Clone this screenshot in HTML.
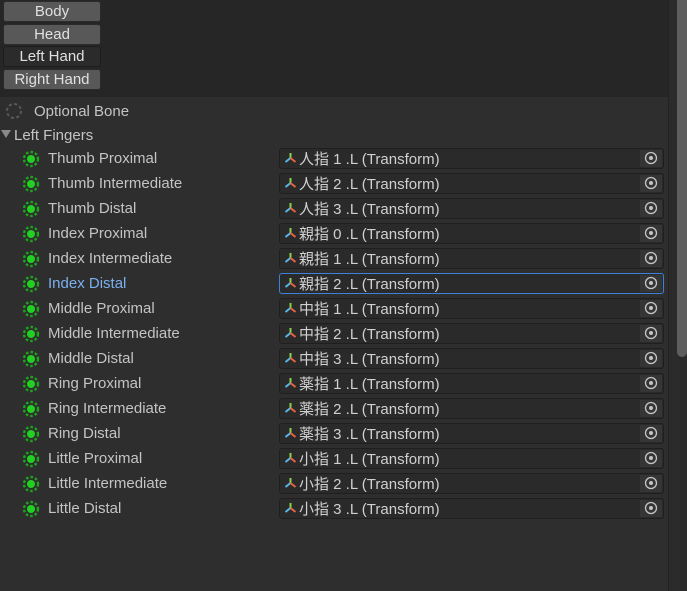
<!DOCTYPE html>
<html><head><style>
body{margin:0;width:687px;height:591px;background:#2e2e2e;font-family:"Liberation Sans","Noto Sans CJK JP",sans-serif;color:#c4c4c4;font-size:15px;position:relative;overflow:hidden}
.top{position:absolute;left:0;top:0;width:668px;height:97px;background:#262626}
.btn{position:absolute;left:3px;width:98px;height:21px;background:#585858;border:1px solid #2a2a2a;border-radius:3px;box-sizing:border-box;text-align:center;line-height:19px;color:#e0e0e0;font-size:15px}
.btn.sel{background:#2b2b2b;border-color:#1e1e1e}
.sb{position:absolute;left:668px;top:0;width:19px;height:591px;background:#2b2b2b;border-left:1px solid #232323}
.thumb{position:absolute;left:677px;top:0;width:10px;height:357px;background:#5e5e5e;border-radius:0 0 5px 5px}
.row{position:absolute;left:0;height:25px;width:668px}
.lab{position:absolute;left:48px;top:4px;line-height:18px}
.ic{position:absolute;left:22px;top:4px;width:18px;height:18px}
.f{position:absolute;left:279px;top:2px;width:385px;height:21px;background:#2a2a2a;border:1px solid #1f1f1f;border-radius:3px;box-sizing:border-box}
.f.act{border:1px solid #3d82d6}
.f .t{position:absolute;left:19px;top:2px;line-height:18px;color:#d0d0d0}
.f .ax{position:absolute;left:4px;top:3px}
.f .pk{position:absolute;right:1px;top:1px;width:22px;height:17px;background:#353535}
.f .pk svg{position:absolute;left:4px;top:1px}
</style></head><body>
<div class="top"></div>
<div class="btn" style="top:1px">Body</div>
<div class="btn" style="top:24px">Head</div>
<div class="btn sel" style="top:46px">Left Hand</div>
<div class="btn" style="top:69px">Right Hand</div>
<div class="sb"></div><div class="thumb"></div>
<svg style="position:absolute;left:5px;top:102px" width="18" height="18"><circle cx="9" cy="9" r="7" fill="none" stroke="#5a5a5a" stroke-width="2" stroke-dasharray="3 2.5"/></svg>
<div style="position:absolute;left:34px;top:103px;line-height:18px">Optional Bone</div>
<svg style="position:absolute;left:1px;top:130px" width="10" height="9"><path d="M0 0H10L5 8Z" fill="#8a8a8a"/></svg>
<div style="position:absolute;left:14px;top:127px;line-height:18px">Left Fingers</div>
<div id="rows"></div>
<script>
var L=["Thumb Proximal","Thumb Intermediate","Thumb Distal","Index Proximal","Index Intermediate","Index Distal","Middle Proximal","Middle Intermediate","Middle Distal","Ring Proximal","Ring Intermediate","Ring Distal","Little Proximal","Little Intermediate","Little Distal"];
var V=["人指 1","人指 2","人指 3","親指 0","親指 1","親指 2","中指 1","中指 2","中指 3","薬指 1","薬指 2","薬指 3","小指 1","小指 2","小指 3"];
var h="";
for(var i=0;i<15;i++){var y=146+i*25;var a=i==5;
h+='<div class="row" style="top:'+y+'px"><svg class="ic" viewBox="0 0 18 18"><circle cx="9" cy="9" r="7" fill="none" stroke="#1fa31f" stroke-width="2.4" stroke-dasharray="2.6 2"/><circle cx="9" cy="9" r="4" fill="#22d022"/></svg><div class="lab" style="'+(a?'color:#7bb0ef':'')+'">'+L[i]+'</div><div class="f'+(a?' act':'')+'"><svg class="ax" width="13" height="12"><path d="M6.5 1V6" stroke="#8ad34a" stroke-width="2"/><path d="M6.5 6L1.5 10" stroke="#5ab6e8" stroke-width="2"/><path d="M6.5 6L11.5 10" stroke="#e8643a" stroke-width="2"/></svg><div class="t">'+V[i]+' .L (Transform)</div><div class="pk"><svg width="14" height="14"><circle cx="7" cy="7" r="5.5" fill="none" stroke="#c4c4c4" stroke-width="1.3"/><circle cx="7" cy="7" r="2" fill="#c4c4c4"/></svg></div></div></div>';}
document.getElementById("rows").innerHTML=h;
</script>
</body></html>
